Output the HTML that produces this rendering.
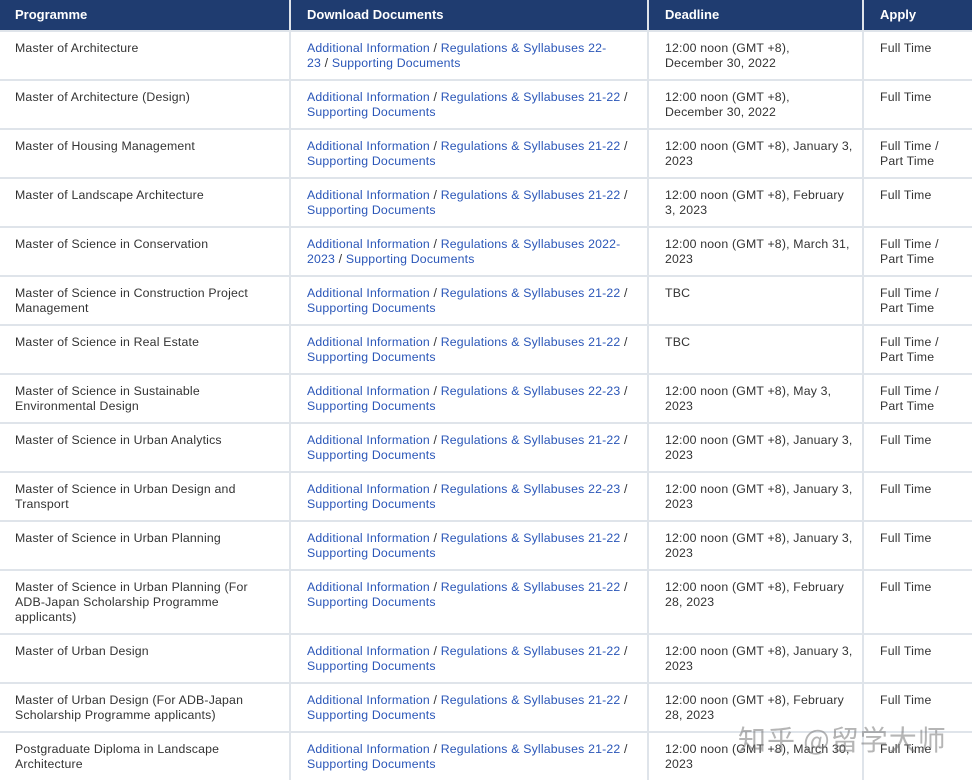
<!DOCTYPE html>
<html><head><meta charset="utf-8"><style>
body{margin:0;width:972px;height:776px;overflow:hidden;background:#dfe4ea;font-family:"Liberation Sans","Noto Sans CJK SC",sans-serif;}
.g{display:grid;grid-template-columns:289px 356px 213px 112px;column-gap:2px;row-gap:2px;grid-template-rows:30px repeat(11,47px) 62px 47px 47px 47px;}
.g>div{background:#fff;font-size:12.3px;letter-spacing:0.18px;line-height:15px;color:#333;padding:9px 4px 0 15px;box-sizing:border-box;overflow:hidden;white-space:nowrap}
.g>div.h{background:#1f3c70;color:#fff;font-weight:bold;font-size:13px;letter-spacing:0;padding:7px 10px 0 15px;line-height:16px}
.g>div:nth-child(4n+2),.g>div:nth-child(4n+3),.g>div:nth-child(4n+4){padding-left:16px}
a{color:#2a56b8;text-decoration:none}
.wm{position:absolute;left:738px;top:719px;font-size:28px;color:rgba(120,120,120,.55);font-family:"Noto Sans CJK SC",sans-serif;letter-spacing:1px;white-space:nowrap}
</style></head><body>
<div class="g">
<div class="h">Programme</div><div class="h">Download Documents</div><div class="h">Deadline</div><div class="h">Apply</div>

<div>Master of Architecture</div><div><a>Additional Information</a> / <a>Regulations &amp; Syllabuses 22-</a><br><a>23</a> / <a>Supporting Documents</a></div><div>12:00 noon (GMT +8),<br>December 30, 2022</div><div>Full Time</div>

<div>Master of Architecture (Design)</div><div><a>Additional Information</a> / <a>Regulations &amp; Syllabuses 21-22</a> /<br><a>Supporting Documents</a></div><div>12:00 noon (GMT +8),<br>December 30, 2022</div><div>Full Time</div>

<div>Master of Housing Management</div><div><a>Additional Information</a> / <a>Regulations &amp; Syllabuses 21-22</a> /<br><a>Supporting Documents</a></div><div>12:00 noon (GMT +8), January 3,<br>2023</div><div>Full Time /<br>Part Time</div>

<div>Master of Landscape Architecture</div><div><a>Additional Information</a> / <a>Regulations &amp; Syllabuses 21-22</a> /<br><a>Supporting Documents</a></div><div>12:00 noon (GMT +8), February<br>3, 2023</div><div>Full Time</div>

<div>Master of Science in Conservation</div><div><a>Additional Information</a> / <a>Regulations &amp; Syllabuses 2022-</a><br><a>2023</a> / <a>Supporting Documents</a></div><div>12:00 noon (GMT +8), March 31,<br>2023</div><div>Full Time /<br>Part Time</div>

<div>Master of Science in Construction Project<br>Management</div><div><a>Additional Information</a> / <a>Regulations &amp; Syllabuses 21-22</a> /<br><a>Supporting Documents</a></div><div>TBC</div><div>Full Time /<br>Part Time</div>

<div>Master of Science in Real Estate</div><div><a>Additional Information</a> / <a>Regulations &amp; Syllabuses 21-22</a> /<br><a>Supporting Documents</a></div><div>TBC</div><div>Full Time /<br>Part Time</div>

<div>Master of Science in Sustainable<br>Environmental Design</div><div><a>Additional Information</a> / <a>Regulations &amp; Syllabuses 22-23</a> /<br><a>Supporting Documents</a></div><div>12:00 noon (GMT +8), May 3,<br>2023</div><div>Full Time /<br>Part Time</div>

<div>Master of Science in Urban Analytics</div><div><a>Additional Information</a> / <a>Regulations &amp; Syllabuses 21-22</a> /<br><a>Supporting Documents</a></div><div>12:00 noon (GMT +8), January 3,<br>2023</div><div>Full Time</div>

<div>Master of Science in Urban Design and<br>Transport</div><div><a>Additional Information</a> / <a>Regulations &amp; Syllabuses 22-23</a> /<br><a>Supporting Documents</a></div><div>12:00 noon (GMT +8), January 3,<br>2023</div><div>Full Time</div>

<div>Master of Science in Urban Planning</div><div><a>Additional Information</a> / <a>Regulations &amp; Syllabuses 21-22</a> /<br><a>Supporting Documents</a></div><div>12:00 noon (GMT +8), January 3,<br>2023</div><div>Full Time</div>

<div>Master of Science in Urban Planning (For<br>ADB-Japan Scholarship Programme<br>applicants)</div><div><a>Additional Information</a> / <a>Regulations &amp; Syllabuses 21-22</a> /<br><a>Supporting Documents</a></div><div>12:00 noon (GMT +8), February<br>28, 2023</div><div>Full Time</div>

<div>Master of Urban Design</div><div><a>Additional Information</a> / <a>Regulations &amp; Syllabuses 21-22</a> /<br><a>Supporting Documents</a></div><div>12:00 noon (GMT +8), January 3,<br>2023</div><div>Full Time</div>

<div>Master of Urban Design (For ADB-Japan<br>Scholarship Programme applicants)</div><div><a>Additional Information</a> / <a>Regulations &amp; Syllabuses 21-22</a> /<br><a>Supporting Documents</a></div><div>12:00 noon (GMT +8), February<br>28, 2023</div><div>Full Time</div>

<div>Postgraduate Diploma in Landscape<br>Architecture</div><div><a>Additional Information</a> / <a>Regulations &amp; Syllabuses 21-22</a> /<br><a>Supporting Documents</a></div><div>12:00 noon (GMT +8), March 30,<br>2023</div><div>Full Time</div>
</div>
<div class="wm">知乎 @留学大师</div>
</body></html>
